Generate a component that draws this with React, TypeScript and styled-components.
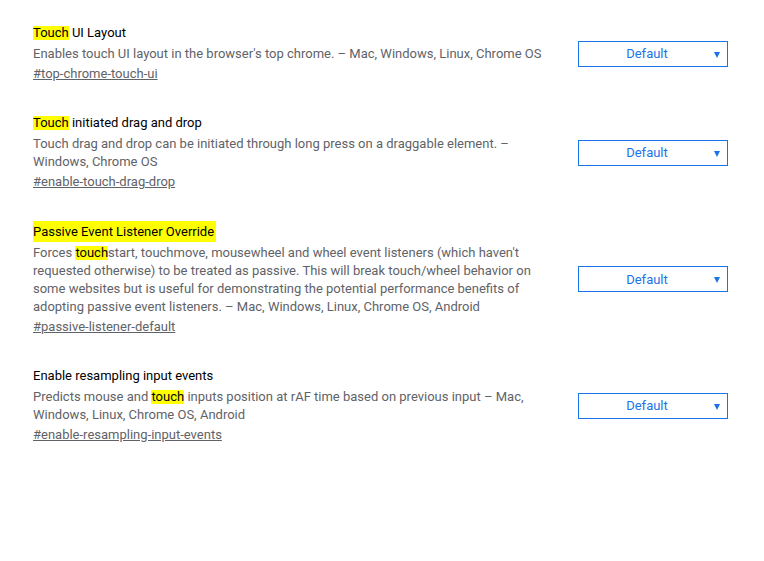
import React from "react";
import styled, { createGlobalStyle } from "styled-components";

const Global = createGlobalStyle`
  html, body { margin: 0; padding: 0; background: #fff; }
  body { font-family: Roboto, "Liberation Sans", Arial, sans-serif; font-size: 13px; }
`;

const Page = styled.div`
  padding: 24px 36px 0 33px;
  display: flex;
  flex-direction: column;
  gap: 31px;
`;

const Experiment = styled.div`
  display: grid;
  grid-template-columns: 512px 150px;
  column-gap: 33px;
  align-items: center;
`;

const TextCol = styled.div`
  display: flex;
  flex-direction: column;
`;

const Title = styled.div<{ $boxed?: boolean }>`
  color: #000;
  font-weight: 400;
  line-height: 18px;
  margin-top: ${(p) => (p.$boxed ? "1px" : "0")};
  margin-bottom: 3px;
`;

const Description = styled.div`
  color: #5f6368;
  line-height: 18px;
`;

const Permalink = styled.a`
  color: #5f6368;
  line-height: 18px;
  margin-top: 2px;
  text-decoration: underline;
  align-self: flex-start;
`;

const Mark = styled.span`
  color: #000;
  background: linear-gradient(#ffff00, #ffff00) 0 1px / 100% 14px no-repeat;
`;

const TitleMark = styled.span`
  background: #ffff00;
  color: #000;
  padding: 3px 2px 3px 0;
`;

const Select = styled.div`
  box-sizing: border-box;
  height: 26px;
  width: 150px;
  border: 1px solid #1a73e8;
  color: #1a73e8;
  display: flex;
  align-items: center;
  justify-content: center;
  position: relative;
  padding-right: 12px;
  font-size: 13px;
`;

const Arrow = styled.span`
  position: absolute;
  right: 7px;
  top: 10px;
  width: 0;
  height: 0;
  border-left: 3.5px solid transparent;
  border-right: 3.5px solid transparent;
  border-top: 6px solid #1a73e8;
`;

type Item = {
  title: React.ReactNode;
  boxed?: boolean;
  desc: React.ReactNode;
  link: string;
};

const items: Item[] = [
  {
    title: (
      <>
        <Mark>Touch</Mark> UI Layout
      </>
    ),
    desc: "Enables touch UI layout in the browser's top chrome. – Mac, Windows, Linux, Chrome OS",
    link: "#top-chrome-touch-ui",
  },
  {
    title: (
      <>
        <Mark>Touch</Mark> initiated drag and drop
      </>
    ),
    desc: "Touch drag and drop can be initiated through long press on a draggable element. – Windows, Chrome OS",
    link: "#enable-touch-drag-drop",
  },
  {
    title: <TitleMark>Passive Event Listener Override</TitleMark>,
    boxed: true,
    desc: (
      <>
        Forces <Mark>touch</Mark>start, touchmove, mousewheel and wheel event listeners (which haven't
        requested otherwise) to be treated as passive. This will break touch/wheel behavior on some
        websites but is useful for demonstrating the potential performance benefits of adopting
        passive event listeners. – Mac, Windows, Linux, Chrome OS, Android
      </>
    ),
    link: "#passive-listener-default",
  },
  {
    title: "Enable resampling input events",
    desc: (
      <>
        Predicts mouse and <Mark>touch</Mark> inputs position at rAF time based on previous input – Mac,
        Windows, Linux, Chrome OS, Android
      </>
    ),
    link: "#enable-resampling-input-events",
  },
];

export default function App() {
  return (
    <>
      <Global />
      <Page>
        {items.map((it) => (
          <Experiment key={it.link}>
            <TextCol>
              <Title $boxed={it.boxed}>{it.title}</Title>
              <Description>{it.desc}</Description>
              <Permalink href={it.link}>{it.link}</Permalink>
            </TextCol>
            <Select>
              Default
              <Arrow />
            </Select>
          </Experiment>
        ))}
      </Page>
    </>
  );
}
